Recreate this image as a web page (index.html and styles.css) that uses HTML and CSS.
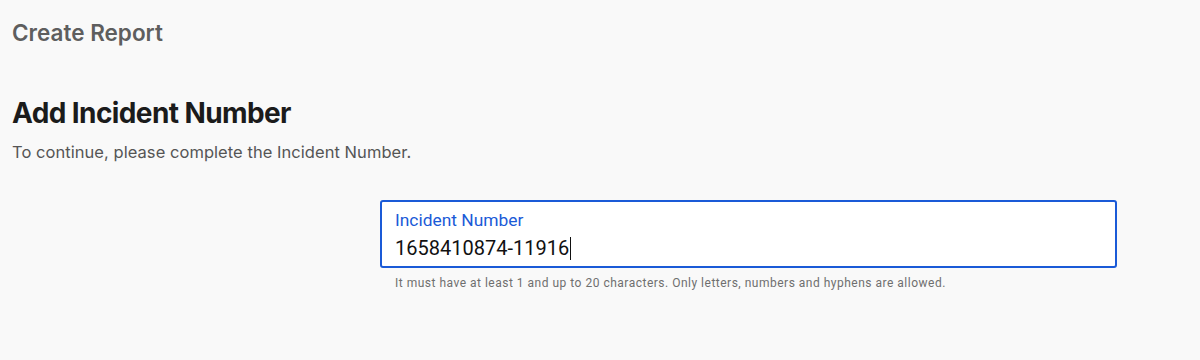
FILE: index.html
```html
<!DOCTYPE html>
<html lang="en">
<head>
    <meta charset="UTF-8">
    <title>Create Report</title>
    <link rel="stylesheet" href="styles.css">
</head>
<body>
    <div class="page">
        <div class="page-title">Create Report</div>

        <div class="intro">
            <h1 class="heading">Add Incident Number</h1>
            <p class="lead">To continue, please complete the Incident Number.</p>
        </div>

        <div class="form-row">
            <div class="field">
                <div class="field-box">
                    <label class="field-label" for="incident">Incident Number</label>
                    <div class="field-value"><span id="incident">1658410874-11916</span><span class="caret"></span></div>
                </div>
                <div class="field-help">It must have at least 1 and up to 20 characters. Only letters, numbers and hyphens are allowed.</div>
            </div>
        </div>
    </div>
</body>
</html>
```

FILE: styles.css
```css
body {
    margin: 0;
    background: #f9f9f9;
    font-family: Inter, "Noto Sans", sans-serif;
}
.page {
    padding: 18px 12px;
}
.page-title {
    font-size: 22.5px;
    font-weight: 600;
    color: #5e5e5e;
    letter-spacing: 0;
    line-height: 30px;
}
.intro {
    margin-top: 48px;
}
.heading {
    margin: 0;
    font-size: 28px;
    font-weight: 700;
    color: #1b1b1b;
    letter-spacing: -0.6px;
    line-height: 34px;
}
.lead {
    margin: 11px 0 0;
    font-size: 16.5px;
    color: #555;
    line-height: 22px;
    letter-spacing: 0.05px;
}
.form-row {
    margin-top: 37px;
    padding-left: 368px;
}
.field {
    width: 737px;
    font-family: Roboto, sans-serif;
}
.field-box {
    background: #fff;
    border: 2px solid #1a5ad7;
    border-radius: 3px;
    padding: 8px 13px 6px;
}
.field-label {
    display: block;
    font-size: 17.4px;
    color: #1a5ad7;
    line-height: 20px;
}
.field-value {
    display: flex;
    align-items: center;
    margin-top: 6px;
    font-size: 20px;
    color: #111;
    line-height: 24px;
}
.caret {
    width: 1px;
    height: 23px;
    background: #111;
    margin-left: 1px;
}
.field-help {
    margin: 8px 0 0 15px;
    font-size: 12px;
    line-height: 14px;
    color: #6f6f6f;
    letter-spacing: 0.5px;
}
```
